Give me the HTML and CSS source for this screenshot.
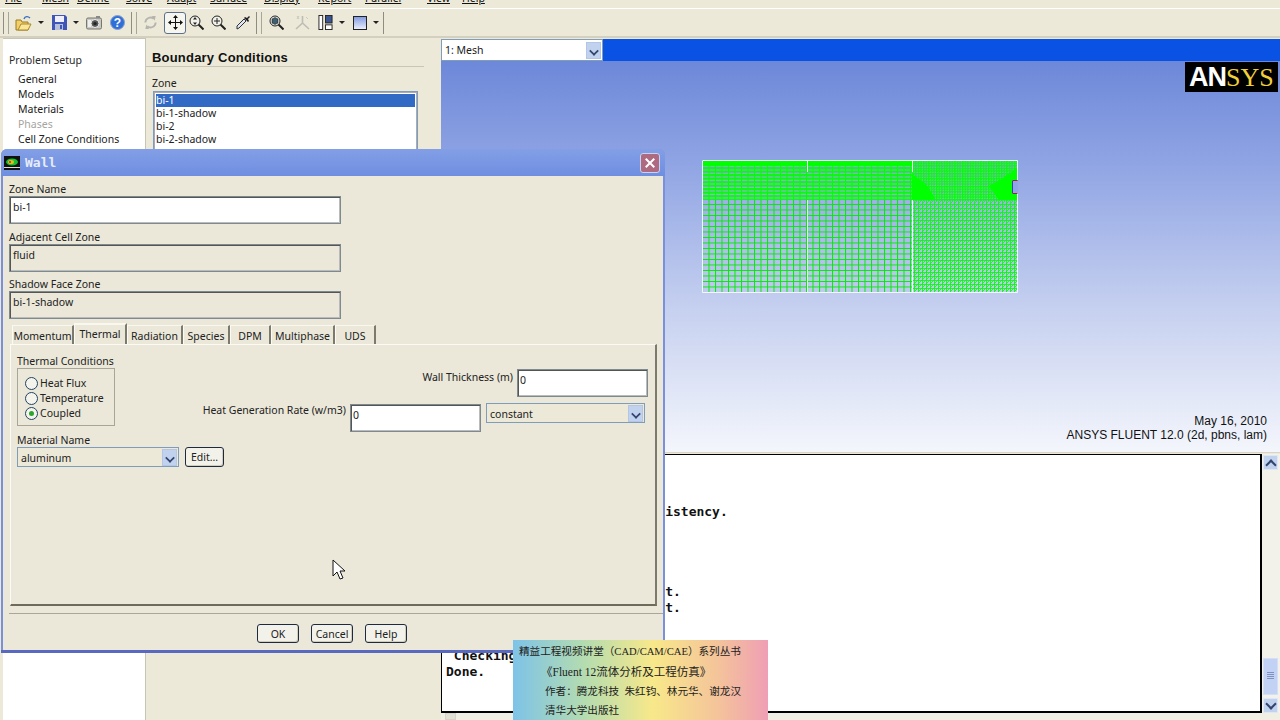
FILE: index.html
```html
<!DOCTYPE html>
<html lang="en">
<head>
<meta charset="utf-8">
<title>ANSYS FLUENT</title>
<link rel="stylesheet" href="styles.css">
</head>
<body>
<div class="app">
  <div class="menubar">
    <span class="m1">File</span><span class="m2">Mesh</span><span class="m3">Define</span><span class="m4">Solve</span><span class="m5">Adapt</span><span class="m6">Surface</span><span class="m7">Display</span><span class="m8">Report</span><span class="m9">Parallel</span><span class="m10">View</span><span class="m11">Help</span>
  </div>
  <div class="toolbar">
    <i class="grip g1"></i>
    <svg class="ic w17" viewBox="0 0 17 16"><path d="M1 5h5l1 2h6v8H1z" fill="#f3cf6b" stroke="#9a7a20"/><path d="M3 15l3-6h10l-3 6z" fill="#fbe596" stroke="#a98a2a"/><path d="M9 4c1-3 4-3 6-1" fill="none" stroke="#3a70c0" stroke-width="1.4"/></svg>
    <i class="drop d8"></i>
    <svg class="ic w15 ml8" viewBox="0 0 15 15"><path d="M0 0h13l2 2v13H0z" fill="#3f55b8"/><rect x="3" y="1" width="9" height="6" fill="#eef"/><rect x="3" y="9" width="8" height="6" fill="#b8bfd8"/><rect x="8" y="10" width="2" height="4" fill="#3f55b8"/></svg>
    <i class="drop d8"></i>
    <svg class="ic w16 ml7" viewBox="0 0 16 14"><rect x="0.5" y="2.5" width="15" height="11" rx="1.5" fill="#c9c9c4" stroke="#77776f"/><circle cx="9" cy="8" r="4" fill="#555" stroke="#eee"/><circle cx="9" cy="8" r="1.6" fill="#222"/><rect x="2" y="4.500" width="3" height="7" fill="#eee"/><rect x="10" y="0.500" width="4" height="2" fill="#888"/></svg>
    <svg class="ic w15 ml8" viewBox="0 0 15 15"><circle cx="7.500" cy="7.500" r="7" fill="#2f6fd8" stroke="#8aa0c8"/><text x="7.500" y="11.500" class="qmark">?</text></svg>
    <i class="grip g2"></i>
    <svg class="ic w15 ml6" viewBox="0 0 15 16"><path d="M2 8a5.500 5.500 0 0 1 9-4M13 8a5.500 5.500 0 0 1-9 4" fill="none" stroke="#b5b5ae" stroke-width="2"/><path d="M9 1l4 0-1 5zM6 15l-4 0 1-5z" fill="#b5b5ae"/></svg>
    <span class="activebtn"><svg class="ic w15" viewBox="0 0 15 15"><path d="M7.500 0l2.500 3H5zM7.500 15l2.500-3H5zM0 7.500l3-2.500v5zM15 7.500l-3-2.500v5z" fill="#111"/><path d="M7.500 3v9M3 7.500h9" stroke="#111"/></svg></span>
    <svg class="ic w15 ml3" viewBox="0 0 15 15"><circle cx="6" cy="6" r="5" fill="#f3f2ea" stroke="#222"/><path d="M9.500 9.500l5 5" stroke="#222" stroke-width="2"/><path d="M6 2l2 2.500H4zM6 10l2-2.500H4z" fill="#222"/></svg>
    <svg class="ic w15 ml7" viewBox="0 0 15 15"><circle cx="6" cy="6" r="5" fill="#f3f2ea" stroke="#222"/><path d="M9.500 9.500l5 5" stroke="#222" stroke-width="2"/><path d="M6 3v6M3 6h6" stroke="#222"/></svg>
    <svg class="ic w15 ml10" viewBox="0 0 15 15"><path d="M1 14l2-1 7-7-2-2-7 7z" fill="#dfe6f5" stroke="#333"/><path d="M8 3l4 4 1-1-1-2 2-2-1-1-2 2-2-1z" fill="#222"/></svg>
    <i class="grip g3"></i>
    <svg class="ic w15 ml7" viewBox="0 0 15 15"><circle cx="6" cy="6" r="5" fill="#f3f2ea" stroke="#222"/><path d="M9.500 9.500l5 5" stroke="#222" stroke-width="2"/><path d="M6 2.500l3 1.500v4L6 9.500 3 8V4z" fill="#406070" stroke="#111" stroke-width=".5"/></svg>
    <svg class="ic w15 ml11" viewBox="0 0 15 15"><path d="M7.500 8L1 14M7.500 8L14 14M7.500 8V1" fill="none" stroke="#bdbdb4" stroke-width="1.600"/><path d="M2 1l2 3M4 1L2 4M11 2l2 2" stroke="#c9c9c0"/></svg>
    <svg class="ic w15 ml8" viewBox="0 0 15 16"><rect x="0.500" y="0.500" width="4" height="15" fill="#fff" stroke="#222"/><rect x="7.500" y="0.500" width="7" height="8" fill="#3a5590" stroke="#222"/><rect x="7.500" y="10.500" width="7" height="5" fill="#fff" stroke="#222"/></svg>
    <i class="drop d7"></i>
    <svg class="ic w14 ml8" viewBox="0 0 14 14"><defs><linearGradient id="sq" x1="0" y1="0" x2="0" y2="1"><stop offset="0" stop-color="#7f99e2"/><stop offset="1" stop-color="#eef2fb"/></linearGradient></defs><rect x="0.500" y="0.500" width="13" height="13" fill="url(#sq)" stroke="#222"/></svg>
    <i class="drop d8"></i>
    <i class="grip g4"></i>
  </div>
  <div class="main">
    <nav class="nav">
      <div class="navhead">Problem Setup</div>
      <div class="navitem">General</div>
      <div class="navitem">Models</div>
      <div class="navitem">Materials</div>
      <div class="navitem off">Phases</div>
      <div class="navitem">Cell Zone Conditions</div>
    </nav>
    <section class="task">
      <h2 class="taskhead">Boundary Conditions</h2>
      <div class="tasklabel">Zone</div>
      <div class="listbox">
        <div class="row sel">bi-1</div>
        <div class="row">bi-1-shadow</div>
        <div class="row">bi-2</div>
        <div class="row">bi-2-shadow</div>
      </div>
    </section>
    <section class="graphics">
      <div class="gfxbar">
        <div class="select winsel"><span class="val">1: Mesh</span><i class="arrow"></i></div>
        <div class="bluebar"></div>
      </div>
      <div class="canvas">
        <div class="logo"><span class="an">AN</span><span class="sys">SYS</span></div>
        <svg class="mesh" viewBox="0 0 316 133" width="316" height="133">
          <defs>
            <pattern id="quad" width="6.5" height="5.500" patternUnits="userSpaceOnUse"><path d="M.5 0V5.500M0 .5H6.500" stroke="#0e0" fill="none"/></pattern>
            <pattern id="band" width="6.500" height="3.500" patternUnits="userSpaceOnUse"><path d="M.5 0V3.500" stroke="#0f0" fill="none"/><path d="M0 1.200H6.500" stroke="#0f0" stroke-width="2.200" fill="none"/></pattern>
            <pattern id="tri1" width="2.600" height="2.600" patternUnits="userSpaceOnUse"><path d="M0 .5H2.600M.5 0V2.600M0 2.600L2.600 0" stroke="#0f0" stroke-width=".9" fill="none"/></pattern>
            <pattern id="tri2" width="4" height="4" patternUnits="userSpaceOnUse"><path d="M0 .5H4M.5 0V4M0 4L4 0" stroke="#0f0" stroke-width=".8" fill="none"/></pattern>
          </defs>
          <rect x="1" y="40" width="209" height="92" fill="url(#quad)"/>
          <rect x="1" y="1" width="209" height="39" fill="url(#band)"/>
          <rect x="1" y="1" width="209" height="5" fill="#0f0"/>
          <rect x="210" y="1" width="105" height="40" fill="url(#tri1)"/>
          <rect x="210" y="41" width="105" height="91" fill="url(#tri2)"/>
          <path d="M210 14l14 10 10 16h-24zM315 8v32h-18l-10-14 14-8z" fill="#0f0"/>
          <path d="M1 .5H315.500V132.500H.5V.5M105.500 1V12M105.500 40V132M210.500 1V12M210.500 40V132" fill="none" stroke="#f2f6ff"/>
          <rect x="311" y="20" width="5" height="13" fill="#8fa5e6"/>
          <path d="M315.500 20.500H310.500M310.500 33.500H315.500" fill="none" stroke="#a02040"/>
          <path d="M310.500 21V33" fill="none" stroke="#3344aa"/>
        </svg>
        <div class="stamp">
          <div>May 16, 2010</div>
          <div>ANSYS FLUENT 12.0 (2d, pbns, lam)</div>
        </div>
      </div>
      <div class="consolerow">
        <pre class="console">



                            istency.




                            t.
                            t.


 Checking
Done.</pre>
        <div class="vscroll">
          <i class="sbtn up"></i>
          <div class="track"></div>
          <i class="thumb"></i>
          <i class="sbtn down"></i>
        </div>
      </div>
      <div class="hscroll"><i class="hbtn"></i></div>
    </section>
  </div>
</div>

<div class="dialog">
  <header class="titlebar">
    <svg class="dlgicon" viewBox="0 0 16 14"><rect width="16" height="14" fill="#111"/><ellipse cx="8" cy="6" rx="6" ry="3.500" fill="#18c030"/><ellipse cx="7" cy="6" rx="3" ry="2" fill="#d8c020"/><circle cx="6" cy="6" r="1" fill="#c02020"/><rect y="11" width="16" height="1" fill="#ddd"/></svg>
    <span class="dlgtitle">Wall</span>
    <i class="closebtn"></i>
  </header>
  <div class="dlgbody">
    <div class="field"><label class="lbl">Zone Name</label><div class="tbox">bi-1</div></div>
    <div class="field tight"><label class="lbl">Adjacent Cell Zone</label><div class="tbox ro">fluid</div></div>
    <div class="field"><label class="lbl">Shadow Face Zone</label><div class="tbox ro">bi-1-shadow</div></div>
    <div class="tabs">
      <span class="tab t1">Momentum</span><span class="tab t2 on">Thermal</span><span class="tab t3">Radiation</span><span class="tab t4">Species</span><span class="tab t5">DPM</span><span class="tab t6">Multiphase</span><span class="tab t7">UDS</span>
    </div>
    <div class="tabpanel">
      <div class="thermal">
        <div class="tcol">
          <div class="lbl">Thermal Conditions</div>
          <div class="group">
            <div class="radio"><i class="dot"></i>Heat Flux</div>
            <div class="radio"><i class="dot"></i>Temperature</div>
            <div class="radio"><i class="dot chk"></i>Coupled</div>
          </div>
        </div>
        <div class="vals">
          <div class="valrow end"><span class="vlbl">Wall Thickness (m)</span><div class="tbox num">0</div></div>
          <div class="valrow end second"><span class="vlbl">Heat Generation Rate (w/m3)</span><div class="tbox num">0</div><div class="select hsel"><span class="val">constant</span><i class="arrow"></i></div></div>
        </div>
      </div>
      <div class="material">
        <div class="lbl matlbl">Material Name</div>
        <div class="matrow"><div class="select msel"><span class="val">aluminum</span><i class="arrow"></i></div><span class="btn edit">Edit...</span></div>
      </div>
    </div>
    <div class="sep"></div>
    <div class="actions"><span class="btn act">OK</span><span class="btn act">Cancel</span><span class="btn act">Help</span></div>
  </div>
</div>

<svg class="cursor" viewBox="0 0 13 21" width="13" height="21"><path d="M1 1v16l4-4 3 7 3-1-3-7h5z" fill="#fff" stroke="#111"/></svg>

<aside class="ad">
  <div class="ad1">精益工程视频讲堂（CAD/CAM/CAE）系列丛书</div>
  <div class="ad2">《Fluent 12流体分析及工程仿真》</div>
  <div class="ad3">作者：腾龙科技&nbsp; 朱红钧、林元华、谢龙汉</div>
  <div class="ad3">清华大学出版社</div>
</aside>
</body>
</html>
```
FILE: styles.css
```css
* { box-sizing: border-box; }
html, body { margin: 0; padding: 0; width: 1280px; height: 720px; overflow: hidden; background: #ece9d8; }
body { font: 10.5px/13px "Noto Sans", "Liberation Sans", sans-serif; color: #222; position: relative; }
i { display: block; font-style: normal; flex: none; }
.app { width: 1280px; height: 720px; display: flex; flex-direction: column; }

/* menu */
.menubar { height: 8px; background: #ece9d8; overflow: hidden; display: flex; font: 10.5px/13px "Noto Sans", sans-serif; color: #111; }
.menubar span { display: block; height: 13px; margin-top: -8px; text-decoration: underline; flex: none; }
.m1 { width: 37px; margin-left: 5px; } .m2 { width: 35px; } .m3 { width: 49px; } .m4 { width: 41px; } .m5 { width: 43px; }
.m6 { width: 54px; } .m7 { width: 54px; } .m8 { width: 47px; } .m9 { width: 62px; } .m10 { width: 35px; } .m11 { width: 30px; }

/* toolbar */
.toolbar { height: 30px; display: flex; align-items: center; background: #ece9d8; border-top: 1px solid #fff; border-bottom: 2px solid #d4d0c0; padding-left: 3px; }
.grip { width: 6px; height: 22px; border-left: 1px solid #8f8d80; border-right: 1px solid #a8a698; }
.g1 { margin-right: 6px; }
.g2 { margin-left: 6px; }
.g3 { margin-left: 5px; }
.g4 { margin-left: 4px; width: 1px; border-right: 0; }
.ic { display: block; flex: none; }
.w14 { width: 14px; height: 14px; }
.w15 { width: 15px; height: 15px; }
.w16 { width: 16px; height: 15px; }
.w17 { width: 17px; height: 16px; }
.ml3 { margin-left: 3px; } .ml6 { margin-left: 6px; } .ml7 { margin-left: 7px; } .ml8 { margin-left: 8px; }
.ml10 { margin-left: 10px; } .ml11 { margin-left: 11px; }
.drop { width: 0; height: 0; border: 3px solid transparent; border-top: 3px solid #222; border-bottom: 0; }
.d8 { margin-left: 6px; margin-right: 0; }
.d7 { margin-left: 6px; }
.qmark { font: bold 12px "Liberation Sans", sans-serif; fill: #fff; text-anchor: middle; }
.activebtn { width: 22px; height: 22px; margin-left: 6px; display: flex; align-items: center; justify-content: center; background: #f6f5ee; border: 1px solid #5c6f8c; border-radius: 3px; flex: none; }

/* main */
.main { flex: 1; display: flex; min-height: 0; }
.nav { width: 142px; margin-left: 3px; background: #fff; border-top: 1px solid #c8c5b4; padding: 14px 0 0 6px; flex: none; }
.navhead { height: 19px; line-height: 14px; color: #2a2a2a; }
.navitem { height: 15px; padding-left: 9px; line-height: 15px; }
.off { color: #a5a5a0; }
.task { width: 296px; padding: 12px 0 0 0; background: #ece9d8; border-left: 1px solid #c8c5b4; flex: none; }
.taskhead { margin: 0 17px 0 0; padding: 1px 0 2px 6px; height: 17px; font: bold 13px/14px "Liberation Sans", sans-serif; letter-spacing: .2px; border-bottom: 1px solid #c9c6b5; color: #111; }
.tasklabel { padding-left: 6px; margin-top: 10px; height: 13px; }
.listbox { margin: 1px 0 0 7px; width: 265px; height: 80px; padding: 2px 2px 0 2px; background: #fff; border: 1px solid #7f9db9; box-shadow: inset 0 0 0 1px #aab; }
.row { height: 13px; line-height: 13px; }
.sel { background: #316ac5; color: #fff; }

/* graphics */
.graphics { flex: 1; min-width: 0; display: flex; flex-direction: column; }
.gfxbar { height: 23px; padding-top: 1px; display: flex; background: #ece9d8; flex: none; }
.bluebar { flex: 1; background: #0a52e4; }
.select { display: flex; align-items: center; background: #ece9d8; border: 1px solid #7f9db9; flex: none; padding-right: 1px; }
.val { flex: 1; padding: 2px 0 0 3px; }
.winsel .val { padding-top: 0; }
.arrow { width: 15px; height: 17px; background: #c1d2ee; border: 1px solid #b4c6e8; position: relative; flex: none; }
.arrow::after { content: ""; position: absolute; left: 3px; top: 4px; width: 6px; height: 6px; border-right: 2px solid #33456e; border-bottom: 2px solid #33456e; transform: rotate(45deg) scale(.85); }
.winsel { width: 162px; height: 22px; background: #fff; }
.canvas { position: relative; height: 392px; background: linear-gradient(#6d88d9, #8ea3e3 25%, #c8d2f0 65%, #f4f6fc); border-bottom: 1px solid #d8d5c6; display: flex; flex-direction: column; justify-content: flex-end; align-items: flex-end; padding: 0 13px 10px 0; flex: none; }
.logo { position: absolute; left: 744px; top: 1px; width: 93px; height: 30px; background: #000; font: bold 27px/30px "Liberation Sans", sans-serif; color: #fff; padding-left: 4px; letter-spacing: -1px; white-space: nowrap; overflow: hidden; }
.sys { font: 26px/30px "Liberation Serif", serif; color: #f2cf3a; letter-spacing: 0; }
.mesh { position: absolute; left: 261px; top: 99px; display: block; }
.stamp { font: 12px/14px "Liberation Sans", sans-serif; color: #111; text-align: right; }
.consolerow { height: 259px; display: flex; margin-top: 1px; flex: none; }
.console { flex: 1; margin: 0; padding: 1px 0 0 4px; border: 1px solid #000; border-width: 1px 2px 2px 1px; background: #fff; font: bold 13px/16px "DejaVu Sans Mono", monospace; color: #111; overflow: hidden; }
.vscroll { width: 18px; padding: 1px 2px 0 1px; display: flex; flex-direction: column; background: #f3f2ea; flex: none; }
.sbtn { height: 15px; background: #c1d2ee; position: relative; border: 1px solid #dfe6f5; }
.sbtn::after { content: ""; position: absolute; left: 3px; width: 6px; height: 6px; border-right: 2px solid #33456e; border-bottom: 2px solid #33456e; transform: rotate(45deg); }
.down::after { top: 1px; }
.up::after { top: 5px; transform: rotate(225deg); }
.track { flex: 1; }
.thumb { height: 37px; margin-bottom: 3px; background: #c1d2f5; border: 1px solid #d4def6; position: relative; }
.thumb::after { content: ""; position: absolute; left: 3px; top: 13px; width: 7px; height: 8px; background: repeating-linear-gradient(#7f92bd 0 1px, transparent 1px 2px); }
.hscroll { flex: 1; background: #f1efe4; padding-left: 4px; }
.hbtn { width: 11px; height: 7px; background: #e2e0d4; border: 1px solid #d6d4c6; }

/* dialog */
.dialog { position: absolute; left: 1px; top: 149px; width: 664px; height: 504px; display: flex; flex-direction: column; background: #7b90dc; border-radius: 6px 6px 0 0; border-bottom: 3px solid #5a69c0; }
.titlebar { height: 27px; display: flex; align-items: center; padding: 0 5px 0 3px; background: linear-gradient(#829fe6, #6f8ee0); border-radius: 6px 6px 0 0; flex: none; }
.dlgicon { width: 16px; height: 14px; display: block; flex: none; }
.dlgtitle { flex: 1; margin-left: 5px; font: bold 13px/14px "DejaVu Sans Mono", monospace; color: #e6ebfa; }
.closebtn { width: 20px; height: 20px; margin-top: 1px; border-radius: 3px; background: #ad6a80; border: 1px solid #c9d2f0; position: relative; }
.closebtn::before, .closebtn::after { content: ""; position: absolute; left: 3px; top: 8px; width: 12px; height: 2px; background: #fff; transform: rotate(45deg); }
.closebtn::after { transform: rotate(-45deg); }
.dlgbody { flex: 1; margin: 0 2px 0 2px; padding: 6px 0 0 6px; background: #ebe8d9; min-height: 0; display: flex; flex-direction: column; }
.lbl { display: block; height: 13px; line-height: 15px; white-space: nowrap; }
.matlbl { line-height: 13px; }
.field { width: 332px; margin-bottom: 6px; flex: none; }
.tight { margin-bottom: 5px; }
.field .lbl { margin-bottom: 1px; }
.tbox { height: 28px; padding: 2px 0 0 3px; background: #fff; border: 1px solid #7d8a90; box-shadow: inset 1px 1px 0 #555, inset 0 0 0 1px #bbb; line-height: 17px; }
.ro { background: #ebe8d9; }
.tabs { height: 19px; display: flex; align-items: flex-end; padding-left: 3px; flex: none; }
.tab { height: 19px; line-height: 21px; text-align: center; border-top: 1px solid #f8f7f0; border-left: 1px solid #fbfaf4; border-right: 2px solid #7c7a6c; flex: none; }
.on { height: 21px; line-height: 19px; background: #ebe8d9; border-top: 2px solid #f8f7f0; }
.t1 { width: 62px; } .t2 { width: 53px; } .t3 { width: 56px; } .t4 { width: 47px; } .t5 { width: 41px; } .t6 { width: 64px; } .t7 { width: 41px; }
.tabpanel { width: 647px; height: 262px; margin-left: 1px; padding: 9px 7px 0 6px; border-top: 1px solid #fbfaf4; border-left: 1px solid #fbfaf4; border-right: 2px solid #7c7a6c; border-bottom: 2px solid #706a5a; flex: none; }
.thermal { display: flex; }
.tcol { width: 98px; flex: none; }
.group { height: 58px; margin-top: 1px; padding: 7px 0 0 7px; border: 1px solid #a8a698; }
.radio { height: 15px; display: flex; align-items: center; gap: 2px; line-height: 15px; white-space: nowrap; }
.dot { width: 13px; height: 13px; border-radius: 50%; border: 1px solid #1f4464; background: #f5f4ec; position: relative; }
.chk::after { content: ""; position: absolute; left: 3px; top: 3px; width: 5px; height: 5px; border-radius: 50%; background: #2da52d; }
.vals { flex: 1; padding-top: 15px; min-width: 0; }
.valrow { display: flex; align-items: flex-start; }
.end { justify-content: flex-end; }
.second { margin-top: 7px; padding-right: 3px; }
.vlbl { margin-top: 1px; margin-right: 4px; line-height: 14px; white-space: nowrap; }
.second .vlbl { margin-top: -1px; }
.num { width: 131px; height: 28px; padding: 2px 0 0 2px; flex: none; }
.hsel { width: 159px; height: 20px; margin-left: 5px; margin-top: -1px; }
.material { margin-top: 2px; }
.matrow { display: flex; align-items: center; gap: 6px; }
.msel { width: 162px; height: 20px; }
.btn { display: flex; align-items: center; justify-content: center; padding-top: 1px; background: #f3f2ea; border: 1px solid #1e2a40; border-radius: 3px; box-shadow: inset -1px -1px 0 #d0cdbc; flex: none; }
.edit { width: 39px; height: 20px; }
.sep { height: 8px; border-bottom: 1px solid #a9a797; flex: none; }
.actions { display: flex; gap: 12px; padding: 10px 0 0 248px; }
.act { width: 42px; height: 19px; }

/* overlays */
.cursor { position: absolute; left: 332px; top: 559px; display: block; }
.ad { position: absolute; left: 513px; top: 640px; width: 255px; height: 80px; padding: 3px 0 0 6px; background: linear-gradient(90deg, #7ec3e8, #b4dcb0 28%, #f8e88a 55%, #f4c49a 80%, #ef9fb4); font: 10.6px/20px "Liberation Serif", "Noto Sans CJK SC", serif; color: #222; white-space: nowrap; overflow: hidden; }
.ad1 { height: 18px; line-height: 17px; }
.ad2 { padding-left: 22px; height: 21px; line-height: 22px; font-size: 11.5px; }
.ad3 { padding-left: 26px; height: 19px; line-height: 20px; }
```
